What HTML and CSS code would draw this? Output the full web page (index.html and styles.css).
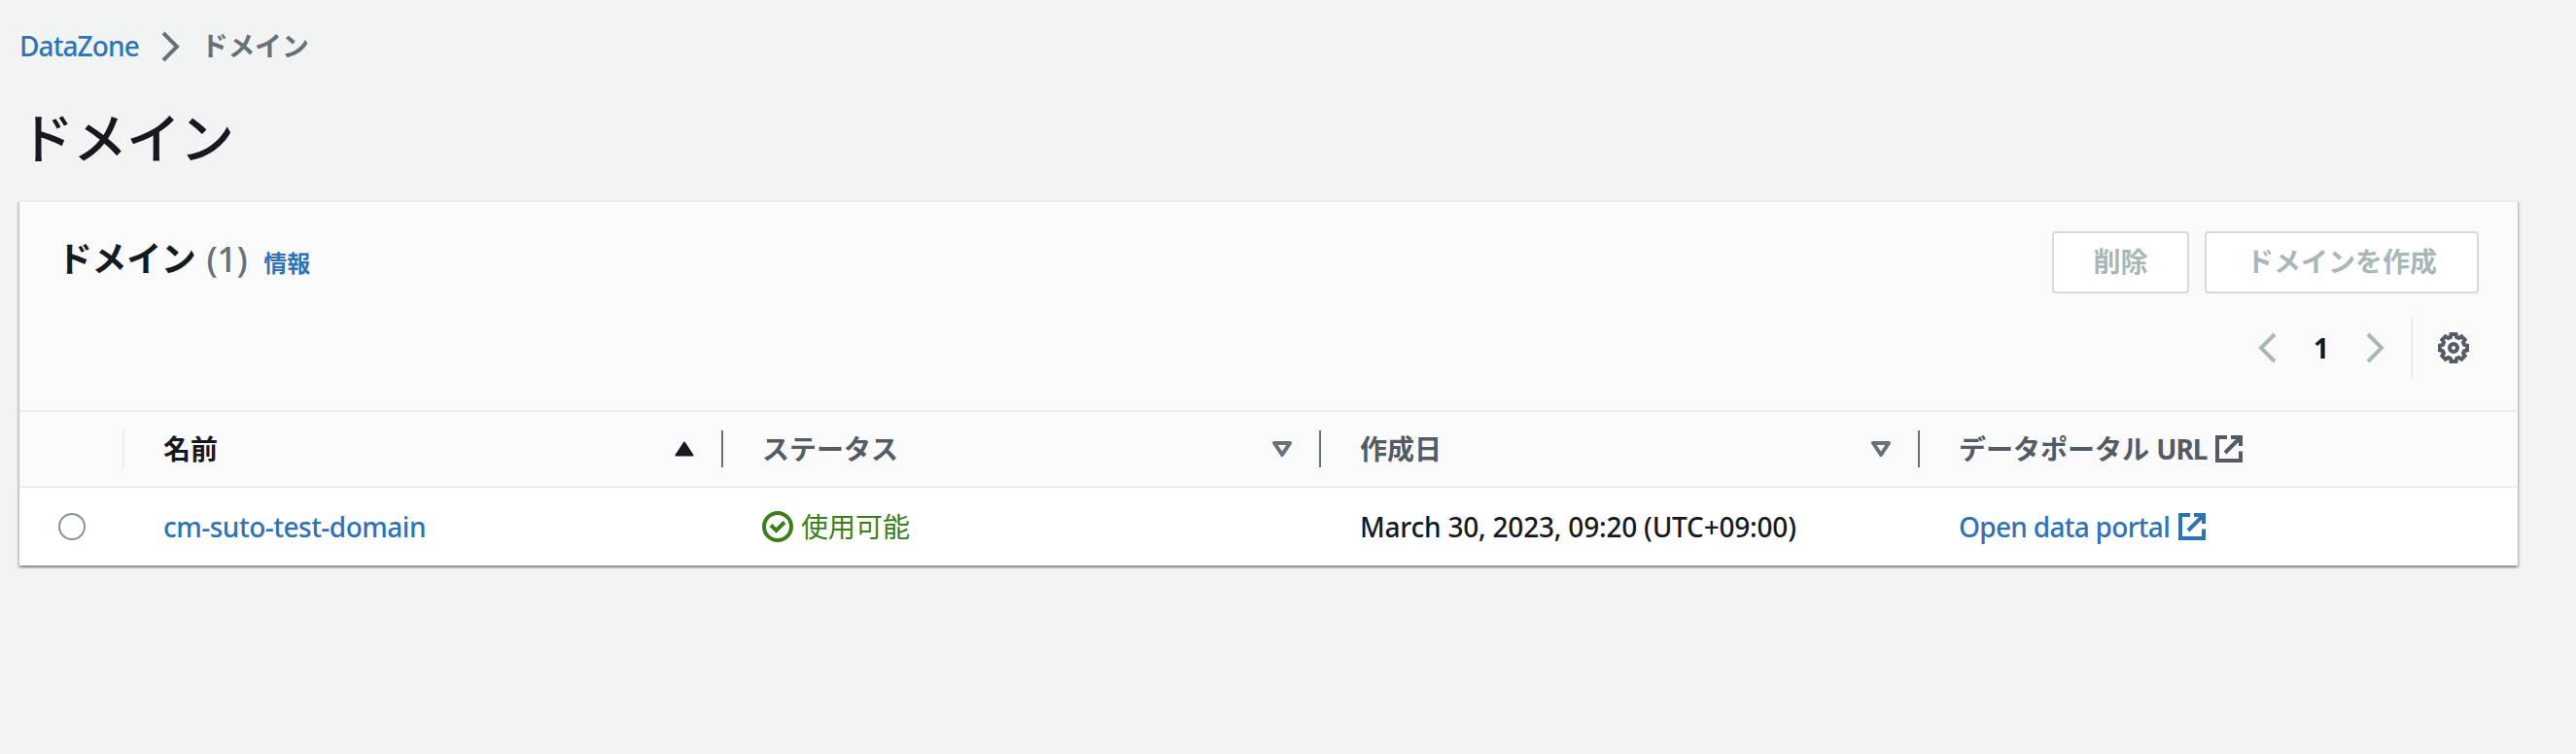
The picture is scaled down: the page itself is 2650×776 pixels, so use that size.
FILE: index.html
```html
<!DOCTYPE html>
<html lang="ja">
<head>
  <meta charset="UTF-8">
  <meta name="viewport" content="width=device-width, initial-scale=1.0">
  <title>DataZone - ドメイン</title>
  <link rel="stylesheet" href="styles.css">
</head>
<body>
  <nav class="breadcrumb">
    <a href="#" class="crumb-link">DataZone</a>
    <svg class="icon crumb-icon" viewBox="0 0 16 16"><path d="M4.500 1l7 7-7 7"/></svg>
    <span class="crumb-current">ドメイン</span>
  </nav>

  <h1>ドメイン</h1>

  <main class="container">
    <header class="container-header">
      <div class="title-row">
        <h2>ドメイン <span class="counter">(1)</span></h2>
        <a href="#" class="info">情報</a>
        <div class="actions">
          <button class="btn-delete" disabled>削除</button>
          <button class="btn-create" disabled>ドメインを作成</button>
        </div>
      </div>
      <div class="tools">
        <svg class="icon page-arrow" viewBox="0 0 16 16"><path d="M11.500 1l-7 7 7 7"/></svg>
        <span class="page-number">1</span>
        <svg class="icon page-arrow" viewBox="0 0 16 16"><path d="M4.500 1l7 7-7 7"/></svg>
        <div class="settings">
          <svg class="icon gear" viewBox="0 0 32 32">
            <path d="M13.5 2h5l.7 3 2.300 1 2.800-1.700 3.400 3.400L26 10.500l1 2.300 3 .7v5l-3 .7-1 2.300 1.700 2.800-3.400 3.400-2.800-1.700-2.300 1-.7 3h-5l-.7-3-2.300-1-2.800 1.700-3.400-3.400L6 21.500l-1-2.300-3-.7v-5l3-.7 1-2.300-1.700-2.800 3.400-3.400L10.500 6l2.300-1z"/>
            <circle cx="16" cy="16" r="4"/>
          </svg>
        </div>
      </div>
    </header>

    <table>
      <thead>
        <tr>
          <th class="col-select"></th>
          <th class="col-name sorted">
            <div class="th-cell">名前
              <svg class="icon sort" viewBox="0 0 20 16"><path class="solid" d="M10 1.500L18.500 14.500h-17z"/></svg>
            </div>
          </th>
          <th class="col-status">
            <div class="th-cell">ステータス
              <svg class="icon sort" viewBox="0 0 20 16"><path d="M2 2h16L10 14z"/></svg>
            </div>
          </th>
          <th class="col-date">
            <div class="th-cell">作成日
              <svg class="icon sort" viewBox="0 0 20 16"><path d="M2 2h16L10 14z"/></svg>
            </div>
          </th>
          <th class="col-url">
            <div class="th-label"><span>データポータル <span class="url">URL</span></span>
              <svg class="icon external" viewBox="0 0 28 28"><path d="M12 2H2v24h24V16.500M16 2h10v9M26 2L10 18"/></svg>
            </div>
          </th>
        </tr>
      </thead>
      <tbody>
        <tr>
          <td class="col-select"><input type="radio" name="domain" aria-label="cm-suto-test-domain"></td>
          <td><a href="#" class="domain-link">cm-suto-test-domain</a></td>
          <td>
            <div class="status">
              <svg class="icon check" viewBox="0 0 32 32"><circle cx="16" cy="16" r="14"/><path d="M9 14.500l5.500 5.500 8.500-8.500"/></svg>
              使用可能
            </div>
          </td>
          <td><span class="date">March 30, 2023, 09:20 (UTC+09:00)</span></td>
          <td>
            <a href="#" class="portal"><span class="portal-text">Open data portal</span>
              <svg class="icon external" viewBox="0 0 28 28"><path d="M12 2H2v24h24V16.500M16 2h10v9M26 2L10 18"/></svg>
            </a>
          </td>
        </tr>
      </tbody>
    </table>
  </main>
</body>
</html>
```

FILE: styles.css
```css
* {
  box-sizing: border-box;
}

body {
  font-family: "Noto Sans", "Noto Sans CJK JP", sans-serif;
  font-size: 28px;
  line-height: 44px;
  margin: 0;
  min-height: 100vh;
  padding: 25px 60px 0 20px;
  background-color: #f2f3f3;
  color: #16191f;
}

a {
  color: #2e73b8;
  font-weight: 500;
  text-decoration: none;
}

.icon {
  display: block;
  flex: none;
  fill: none;
  stroke: currentColor;
}

.breadcrumb {
  display: flex;
  align-items: center;
  height: 44px;
  color: #687078;
}

.crumb-link {
  letter-spacing: -0.9px;
}

.crumb-icon {
  width: 32px;
  height: 32px;
  margin: 2px 16px 0;
  stroke-width: 2;
}

.crumb-current {
  font-weight: 700;
  letter-spacing: -0.4px;
}

h1 {
  margin: 32px 0 0;
  font-size: 56px;
  font-weight: 500;
  line-height: 80px;
  letter-spacing: -1px;
}

.container {
  margin-top: 25px;
  border-top: 2px solid #eaeded;
  background-color: #fff;
  box-shadow: 0 2px 2px rgba(0, 28, 36, 0.3), 2px 2px 2px rgba(0, 28, 36, 0.15), -2px 2px 2px rgba(0, 28, 36, 0.15);
}

.container-header {
  height: 214px;
  padding: 30px 40px 0;
  background-color: #fafafa;
}

.title-row {
  display: flex;
  height: 64px;
}

h2 {
  margin: 0 0 0 -1px;
  font-size: 36px;
  line-height: 58px;
  letter-spacing: -0.4px;
}

.counter {
  margin-left: 2px;
  font-weight: 500;
  color: #687078;
}

.info {
  margin: 11px 0 0 17px;
  font-size: 24px;
  font-weight: 700;
}

.actions {
  display: flex;
  gap: 16px;
  margin-left: auto;
}

button {
  height: 64px;
  padding: 0 0 3px;
  border: 2px solid #d5dbdb;
  border-radius: 4px;
  background-color: #fff;
  color: #aab7b8;
  font: inherit;
  font-weight: 700;
}

.btn-delete {
  width: 141px;
}

.btn-create {
  width: 282px;
}

.tools {
  display: flex;
  align-items: center;
  justify-content: flex-end;
  height: 64px;
  margin-top: 24px;
}

.page-arrow {
  width: 32px;
  height: 32px;
  color: #aab7b8;
  stroke-width: 2;
}

.page-number {
  width: 78px;
  text-align: center;
  font-weight: 700;
}

.settings {
  display: flex;
  align-items: center;
  height: 64px;
  margin-left: 21px;
  padding: 0 10px 0 26px;
  border-left: 2px solid #eaeded;
}

.gear {
  width: 32px;
  height: 32px;
  color: #545b64;
  stroke-width: 4;
}

table {
  width: 100%;
  border-spacing: 0;
  table-layout: fixed;
}

th, td {
  height: 80px;
  padding: 0 0 0 40px;
  text-align: left;
}

th {
  border-top: 2px solid #eaeded;
  border-bottom: 2px solid #eaeded;
  background-color: #fafafa;
  color: #545b64;
}

.sorted {
  color: #16191f;
}

.col-select {
  width: 108px;
}

.col-name, .col-date {
  width: 616px;
}

.col-status {
  width: 615px;
}

.th-cell, th.col-select::after {
  display: flex;
  align-items: center;
  justify-content: space-between;
  height: 38px;
  padding-right: 28px;
  padding-bottom: 1px;
  border-right: 2px solid #687078;
}

th.col-select::after {
  content: "";
  border-color: #eaeded;
}

.sort {
  width: 20px;
  height: 16px;
  stroke-width: 4;
  stroke-linejoin: round;
  color: #687078;
}

.sorted .sort {
  color: #16191f;
}

.solid {
  fill: currentColor;
  stroke-width: 2;
}

.th-label, .portal, .status {
  display: flex;
  align-items: center;
  gap: 9px;
}

.url {
  letter-spacing: -1px;
}

.external {
  width: 28px;
  height: 28px;
  stroke-width: 4;
}

input {
  appearance: none;
  display: block;
  width: 28px;
  height: 28px;
  margin: 0;
  border: 2px solid #879596;
  border-radius: 50%;
}

.domain-link {
  letter-spacing: -0.5px;
}

.status {
  gap: 8px;
  color: #3a8017;
}

.check {
  width: 32px;
  height: 32px;
  stroke-width: 4;
}

.date {
  font-weight: 500;
  letter-spacing: -0.2px;
}

.portal-text {
  letter-spacing: -0.7px;
}
```
